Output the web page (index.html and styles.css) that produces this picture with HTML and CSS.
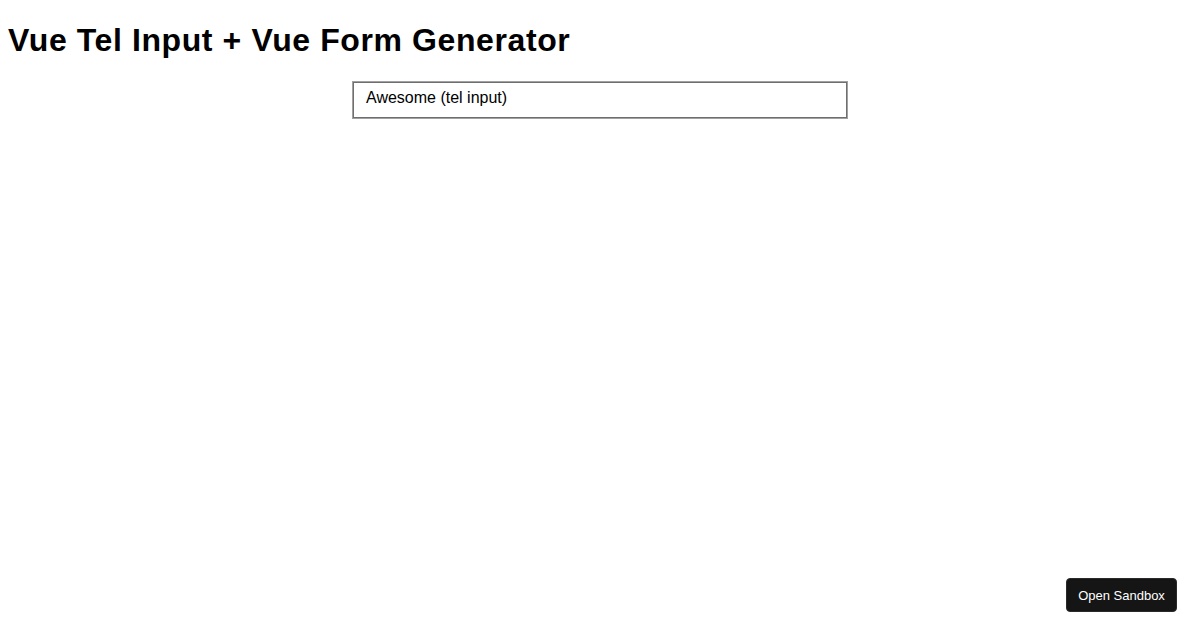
FILE: index.html
```html
<!DOCTYPE html>
<html>
<head>
<meta charset="utf-8">
<link rel="stylesheet" href="styles.css">
</head>
<body>
<h1 class="title">Vue Tel Input + Vue Form Generator</h1>
<form class="form">
  <div class="field">Awesome (tel input)</div>
</form>
<a class="sandbox-btn">Open Sandbox</a>
</body>
</html>
```
FILE: styles.css
```css
html, body {
  background: #fff;
}
body {
  margin: 8px;
  font-family: "Liberation Sans", Arial, sans-serif;
  color: #000;
}
.title {
  font-size: 32px;
  font-weight: bold;
  letter-spacing: 0.6px;
  margin: 14px 0 22px;
}
.form {
  display: flex;
  justify-content: center;
  margin-left: -8px;
  margin-right: -8px;
}
.field {
  box-sizing: border-box;
  width: 496px;
  height: 38px;
  border: 1px solid #a0a0a0;
  box-shadow: inset 0 0 0 1px #6f6f6f;
  padding: 6px 13px;
  font-size: 16px;
  line-height: 20px;
}
.sandbox-btn {
  position: fixed;
  right: 23px;
  bottom: 18px;
  width: 111px;
  height: 34px;
  box-sizing: border-box;
  display: flex;
  align-items: center;
  justify-content: center;
  background: #151515;
  color: #fff;
  border-radius: 4px;
  font-family: "Liberation Sans", Arial, sans-serif;
  font-size: 13px;
  border: 1px solid #2a2a2a;
}
```
